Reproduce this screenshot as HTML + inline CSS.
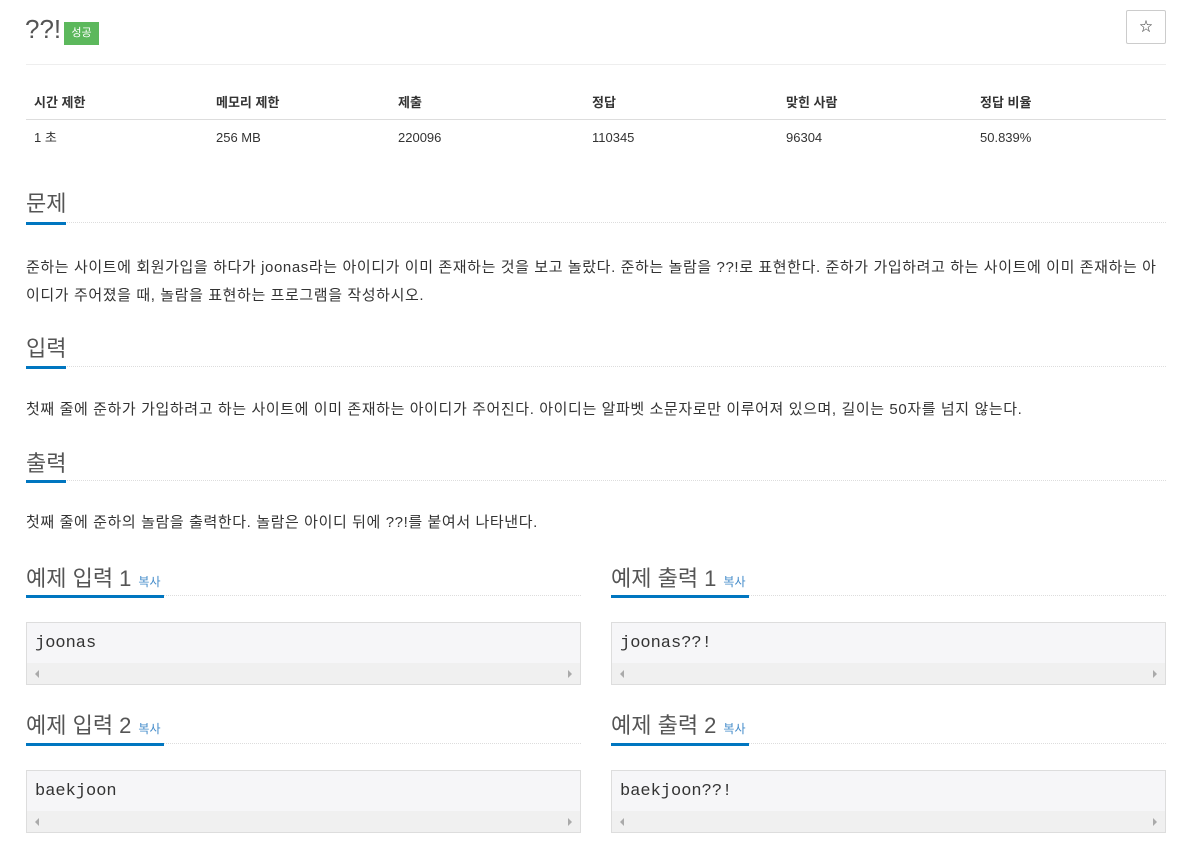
<!DOCTYPE html>
<html><head><meta charset="utf-8"><style>
*{margin:0;padding:0;box-sizing:border-box}
body{width:1187px;height:847px;background:#fff;font-family:"Liberation Sans","Noto Sans CJK KR",sans-serif;color:#333;position:relative;overflow:hidden}
.a{position:absolute;white-space:nowrap}
.h{font-size:22px;color:#555;}
.line{position:absolute;height:0;border-top:1px dotted #ddd}
.blue{position:absolute;height:3px;background:#0076c0}
.p{font-size:15px;letter-spacing:0.6px;color:#333;line-height:28px}
.th{font-size:13px;font-weight:bold;color:#333;line-height:16px}
.td{font-size:13px;color:#333;line-height:16px}
.box{position:absolute;width:555px;height:63px;border:1px solid #ddd;background:#f6f6f8}
.box .t{position:absolute;left:8px;top:11px;font-family:"Liberation Mono",monospace;font-size:17px;color:#333}
.box .sb{position:absolute;left:0;right:0;bottom:0;height:21px;background:#f0f0f0}
.box .l{position:absolute;left:8px;top:7px;border:4px solid transparent;border-right:4px solid #aaa;border-left:0}
.box .r{position:absolute;right:8px;top:7px;border:4px solid transparent;border-left:4px solid #aaa;border-right:0}
.cp{font-size:12px;color:#428bca;margin-left:7px}
</style></head><body>
<div class="a" style="left:25px;top:14px;font-size:26px;color:#555">??!</div>
<div class="a" style="left:64px;top:22px;width:35px;height:23px;background:#5cb85c;color:#fff;font-size:11px;text-align:center;line-height:23px">성공</div>
<div class="a" style="left:1126px;top:10px;width:40px;height:34px;border:1px solid #ccc;border-radius:2px;text-align:center;line-height:32px;font-size:13px;color:#333">☆</div>
<div class="a" style="left:26px;top:64px;width:1140px;height:1px;background:#eee"></div>

<div class="a th" style="left:34px;top:95px">시간 제한</div>
<div class="a th" style="left:216px;top:95px">메모리 제한</div>
<div class="a th" style="left:398px;top:95px">제출</div>
<div class="a th" style="left:592px;top:95px">정답</div>
<div class="a th" style="left:786px;top:95px">맞힌 사람</div>
<div class="a th" style="left:980px;top:95px">정답 비율</div>
<div class="a" style="left:26px;top:119px;width:1140px;height:1px;background:#ddd"></div>
<div class="a td" style="left:34px;top:130px">1 초</div>
<div class="a td" style="left:216px;top:130px">256 MB</div>
<div class="a td" style="left:398px;top:130px">220096</div>
<div class="a td" style="left:592px;top:130px">110345</div>
<div class="a td" style="left:786px;top:130px">96304</div>
<div class="a td" style="left:980px;top:130px">50.839%</div>

<div class="a h" style="left:26px;top:186px">문제</div>
<div class="line" style="left:26px;top:222px;width:1140px"></div>
<div class="blue" style="left:26px;top:222px;width:40px"></div>
<div class="a p" style="left:26px;top:254px">준하는 사이트에 회원가입을 하다가 joonas라는 아이디가 이미 존재하는 것을 보고 놀랐다. 준하는 놀람을 ??!로 표현한다. 준하가 가입하려고 하는 사이트에 이미 존재하는 아</div>
<div class="a p" style="left:26px;top:282px">이디가 주어졌을 때, 놀람을 표현하는 프로그램을 작성하시오.</div>

<div class="a h" style="left:26px;top:331px">입력</div>
<div class="line" style="left:26px;top:366px;width:1140px"></div>
<div class="blue" style="left:26px;top:366px;width:40px"></div>
<div class="a p" style="left:26px;top:396px">첫째 줄에 준하가 가입하려고 하는 사이트에 이미 존재하는 아이디가 주어진다. 아이디는 알파벳 소문자로만 이루어져 있으며, 길이는 50자를 넘지 않는다.</div>

<div class="a h" style="left:26px;top:446px">출력</div>
<div class="line" style="left:26px;top:480px;width:1140px"></div>
<div class="blue" style="left:26px;top:480px;width:40px"></div>
<div class="a p" style="left:26px;top:509px">첫째 줄에 준하의 놀람을 출력한다. 놀람은 아이디 뒤에 ??!를 붙여서 나타낸다.</div>

<div class="a h" style="left:26px;top:561px">예제 입력 1<span class="cp">복사</span></div>
<div class="line" style="left:26px;top:595px;width:555px"></div>
<div class="blue" style="left:26px;top:595px;width:138px"></div>
<div class="box" style="left:26px;top:622px"><div class="t">joonas</div><div class="sb"><div class="l"></div><div class="r"></div></div></div>

<div class="a h" style="left:611px;top:561px">예제 출력 1<span class="cp">복사</span></div>
<div class="line" style="left:611px;top:595px;width:555px"></div>
<div class="blue" style="left:611px;top:595px;width:138px"></div>
<div class="box" style="left:611px;top:622px"><div class="t">joonas??!</div><div class="sb"><div class="l"></div><div class="r"></div></div></div>

<div class="a h" style="left:26px;top:708px">예제 입력 2<span class="cp">복사</span></div>
<div class="line" style="left:26px;top:743px;width:555px"></div>
<div class="blue" style="left:26px;top:743px;width:138px"></div>
<div class="box" style="left:26px;top:770px"><div class="t">baekjoon</div><div class="sb"><div class="l"></div><div class="r"></div></div></div>

<div class="a h" style="left:611px;top:708px">예제 출력 2<span class="cp">복사</span></div>
<div class="line" style="left:611px;top:743px;width:555px"></div>
<div class="blue" style="left:611px;top:743px;width:138px"></div>
<div class="box" style="left:611px;top:770px"><div class="t">baekjoon??!</div><div class="sb"><div class="l"></div><div class="r"></div></div></div>
</body></html>
